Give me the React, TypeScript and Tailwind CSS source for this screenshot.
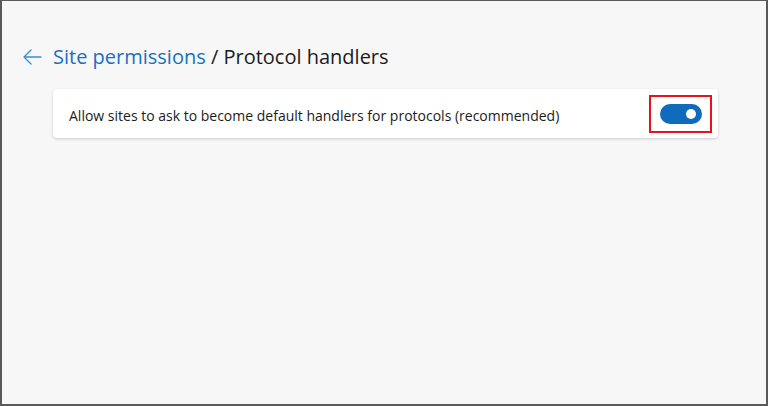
import React from 'react';

const App: React.FC = () => {
  return (
    <div className="w-[768px] h-[406px] bg-[#f7f7f7] border-l-2 border-t border-r-2 border-b-2 border-[#5a5a5a] font-['Open_Sans',sans-serif] text-[#1b1b1b]">
      <div className="flex items-center pl-[20px] pt-[40px] h-[72px]">
        <svg width="20" height="16" viewBox="0 0 20 16" className="text-[#3b8fd8]">
          <path d="M9 1 L2 8 L9 15 M2 8 H19" fill="none" stroke="currentColor" strokeWidth="1.4" strokeLinecap="round" strokeLinejoin="round" />
        </svg>
        <h1 className="ml-[11px] text-[20px] leading-none">
          <span className="text-[#1a6fc0]">Site permissions</span>
          <span> / Protocol handlers</span>
        </h1>
      </div>
      <div className="ml-[51px] mt-[16px] w-[665px] h-[49px] bg-white rounded-[4px] shadow-[0_1px_3px_rgba(0,0,0,0.18)] flex items-center justify-between pl-[16px] pr-[6px]">
        <span className="text-[14px] pt-[3px]">Allow sites to ask to become default handlers for protocols (recommended)</span>
        <div className="w-[63px] h-[38px] border-2 border-[#e8141c] flex items-center justify-center">
          <div className="w-[42px] h-[20px] rounded-full bg-[#0f6cbd] flex items-center justify-end pr-[6px]">
            <div className="w-[10px] h-[10px] rounded-full bg-white" />
          </div>
        </div>
      </div>
    </div>
  );
};

export default App;
